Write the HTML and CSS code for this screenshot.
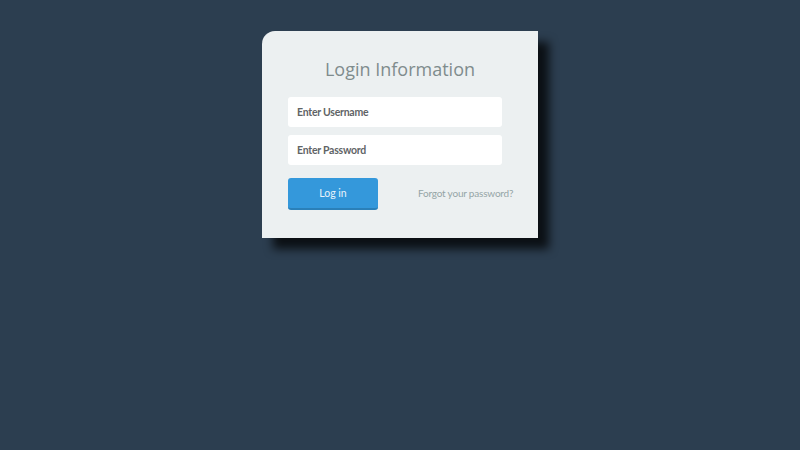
FILE: index.html
```html
<!DOCTYPE html>
<html lang="en">
<head>
<meta charset="utf-8">
<title>Login</title>
<link rel="stylesheet" href="styles.css">
</head>
<body>
  <main class="page">
    <form class="login-card">
      <h1 class="login-title">Login Information</h1>
      <input class="field" type="text" placeholder="Enter Username">
      <input class="field" type="password" placeholder="Enter Password">
      <div class="actions">
        <button class="btn-login" type="button">Log in</button>
        <a class="forgot" href="#">Forgot your password?</a>
      </div>
    </form>
  </main>
</body>
</html>
```
FILE: styles.css
```css
* { box-sizing: border-box; }

html, body {
  margin: 0;
  height: 100%;
}

body {
  background: #2c3e50;
  font-family: "Open Sans", "Noto Sans", sans-serif;
}

.page {
  display: flex;
  justify-content: center;
  padding-top: 31px;
}

.login-card {
  width: 276px;
  height: 207px;
  padding: 0 36px 0 26px;
  background: #ecf0f1;
  border-radius: 13px 0 0 0;
  box-shadow: 11px 11px 10px rgba(0, 0, 0, 0.75);
  display: flex;
  flex-direction: column;
}

.login-title {
  margin: 25px 0 15px 10px;
  font-family: "Open Sans", sans-serif;
  font-weight: 400;
  font-size: 18px;
  line-height: 26px;
  color: #7f8c8d;
  text-align: center;
}

.field {
  width: 214px;
  height: 30px;
  flex: none;
  margin-bottom: 8px;
  padding: 0 9px;
  border: 0;
  border-radius: 3px;
  background: #fff;
  font-family: "Lato", sans-serif;
  font-weight: 700;
  font-size: 10.5px;
  letter-spacing: -0.25px;
  color: #555;
  outline: none;
}

.field::placeholder {
  color: #5f6466;
}

.actions {
  display: flex;
  align-items: center;
  margin-top: 5px;
}

.btn-login {
  flex: none;
  width: 90px;
  height: 32px;
  border: 0;
  border-bottom: 2px solid #2a80b9;
  border-radius: 3px;
  background: #3498db;
  color: #e8f2fa;
  font-family: "Lato", sans-serif;
  font-size: 10.5px;
  padding: 0;
}

.forgot {
  flex: none;
  margin-left: 40px;
  margin-top: -2px;
  font-family: "Lato", sans-serif;
  font-size: 10px;
  letter-spacing: -0.2px;
  color: #95a5a6;
  text-decoration: none;
  white-space: nowrap;
}
```
